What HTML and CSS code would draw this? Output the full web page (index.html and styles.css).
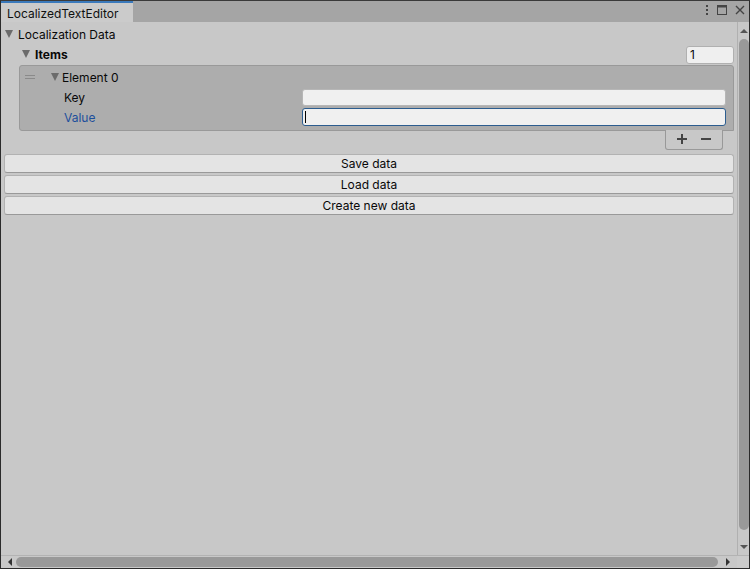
FILE: index.html
```html
<!DOCTYPE html>
<html>
<head>
<meta charset="utf-8">
<link rel="stylesheet" href="styles.css">
</head>
<body>
<div class="window">
  <div class="tabbar">
    <div class="tab">LocalizedTextEditor</div>
    <div class="tab-spacer"></div>
    <div class="win-icons">
      <svg class="ico" width="6" height="12" viewBox="0 0 6 12"><rect x="2" y="1" width="2" height="2" fill="#444"/><rect x="2" y="5" width="2" height="2" fill="#444"/><rect x="2" y="9" width="2" height="2" fill="#444"/></svg>
      <svg class="ico" width="12" height="12" viewBox="0 0 12 12"><rect x="1.5" y="1.5" width="9" height="9" fill="none" stroke="#444" stroke-width="1"/><rect x="1" y="1" width="10" height="2.5" fill="#444"/></svg>
      <svg class="ico" width="12" height="12" viewBox="0 0 12 12"><path d="M2 2 L10 10 M10 2 L2 10" stroke="#444" stroke-width="1.4"/></svg>
    </div>
  </div>
  <div class="body">
    <div class="content">
      <div class="row foldout">
        <span class="tri"></span><span class="label">Localization Data</span>
      </div>
      <div class="row items">
        <span class="tri"></span><span class="label bold">Items</span>
        <span class="grow"></span>
        <span class="intfield">1</span>
      </div>
      <div class="list">
        <div class="element-row">
          <span class="handle"></span>
          <span class="tri small-gap"></span><span class="label">Element 0</span>
        </div>
        <div class="prop-row">
          <span class="prop-label">Key</span>
          <span class="textfield"></span>
        </div>
        <div class="prop-row">
          <span class="prop-label focus">Value</span>
          <span class="textfield focused"><span class="caret"></span></span>
        </div>
      </div>
      <div class="list-footer-wrap">
        <div class="list-footer">
          <svg width="12" height="12" viewBox="0 0 12 12"><path d="M6 1 V11 M1 6 H11" stroke="#444" stroke-width="2"/></svg>
          <svg width="12" height="12" viewBox="0 0 12 12"><path d="M1 6 H11" stroke="#444" stroke-width="2"/></svg>
        </div>
      </div>
      <div class="buttons">
        <div class="btn">Save data</div>
        <div class="btn">Load data</div>
        <div class="btn">Create new data</div>
      </div>
    </div>
    <div class="vscroll">
      <svg class="arrow" width="8" height="6" viewBox="0 0 8 6"><path d="M0 5 L4 1 L8 5 Z" fill="#555"/></svg>
      <div class="vthumb"></div>
      <svg class="arrow" width="8" height="6" viewBox="0 0 8 6"><path d="M0 1 L4 5 L8 1 Z" fill="#555"/></svg>
    </div>
  </div>
  <div class="hbar">
    <div class="hscroll">
      <svg class="arrow" width="6" height="8" viewBox="0 0 6 8"><path d="M5 0 L1 4 L5 8 Z" fill="#333"/></svg>
      <div class="hthumb"></div>
      <svg class="arrow" width="6" height="8" viewBox="0 0 6 8"><path d="M1 0 L5 4 L1 8 Z" fill="#333"/></svg>
    </div>
    <div class="corner"></div>
  </div>
</div>
</body>
</html>
```

FILE: styles.css
```css
* { box-sizing: border-box; }
html, body { margin: 0; padding: 0; }
body {
  font-family: Inter, "Liberation Sans", Arial, sans-serif;
  font-size: 12px;
  color: #090909;
  background: #232323;
}
.window {
  width: 750px;
  height: 569px;
  display: flex;
  flex-direction: column;
  background: #c8c8c8;
  border-left: 1px solid #2b2b2b;
  border-right: 1px solid #2b2b2b;
  border-bottom: 1px solid #2b2b2b;
  border-top: 1px solid #3a3a3a;
  overflow: hidden;
}
.tabbar {
  height: 21px;
  display: flex;
  background: #a5a5a5;
  flex-shrink: 0;
}
.tab {
  width: 132px;
  background: #cbcbcb;
  border-top: 2px solid #3a79bb;
  padding: 2px 0 0 6px;
  line-height: 17px;
  font-size: 12px;
  color: #101010;
}
.tab-spacer { flex: 1; }
.win-icons {
  display: flex;
  align-items: center;
  gap: 6px;
  padding: 0 3px 3px 0;
}
.ico { display: block; }
.body {
  flex: 1;
  display: flex;
  min-height: 0;
}
.content {
  flex: 1;
  padding: 2px 3px 0 3px;
}
.row {
  display: flex;
  align-items: center;
  height: 20px;
}
.tri {
  width: 0; height: 0;
  border-left: 4px solid transparent;
  border-right: 4px solid transparent;
  border-top: 8px solid #6b6b6b;
  margin-right: 5px;
}
.tri.small-gap { margin-right: 3px; }
.foldout { padding-left: 1px; }
.items { padding-left: 18px; height: 20px; }
.bold { font-weight: 700; }
.grow { flex: 1; }
.intfield {
  width: 48px;
  height: 18px;
  background: #efefef;
  border: 1px solid #b0b0b0;
  border-radius: 3px;
  padding-left: 3px;
  line-height: 16px;
  margin-top: 1px;
}
.list {
  margin: 1px 0 0 15px;
  background: #adadad;
  border: 1px solid #999;
  border-radius: 3px 3px 0 3px;
  height: 66px;
  padding-top: 1px;
}
.element-row {
  display: flex;
  align-items: center;
  height: 20px;
  padding-left: 5px;
}
.handle {
  width: 10px;
  height: 4px;
  border-top: 1px solid #8a8a8a;
  border-bottom: 1px solid #8a8a8a;
  margin-right: 16px;
}
.prop-row {
  display: flex;
  align-items: center;
  height: 20px;
  padding-left: 44px;
  padding-right: 7px;
}
.prop-label { width: 238px; }
.prop-label.focus { color: #1d4f9c; }
.textfield {
  flex: 1;
  height: 17px;
  background: #f0f0f0;
  border: 1px solid #b6b6b6;
  border-radius: 3px;
  position: relative;
}
.textfield.focused {
  height: 18px;
  border: 1px solid #2c5d8f;
}
.caret {
  position: absolute;
  left: 2px; top: 2px;
  width: 1px; height: 12px;
  background: #000;
}
.list-footer-wrap {
  display: flex;
  justify-content: flex-end;
  padding-right: 11px;
  height: 20px;
}
.list-footer {
  width: 58px;
  height: 20px;
  background: #c8c8c8;
  border: 1px solid #999;
  border-top: none;
  border-radius: 0 0 3px 3px;
  margin-top: -1px;
  display: flex;
  align-items: center;
  justify-content: center;
  gap: 12px;
  padding-bottom: 1px;
}
.buttons {
  margin-top: 3px;
  display: flex;
  flex-direction: column;
  gap: 2px;
}
.btn {
  height: 19px;
  background: #e4e4e4;
  border: 1px solid #b2b2b2;
  border-bottom-color: #999;
  border-radius: 3px;
  text-align: center;
  line-height: 17px;
  color: #090909;
}
.vscroll {
  width: 12px;
  border-left: 1px solid #b0b0b0;
  display: flex;
  flex-direction: column;
  align-items: center;
  padding: 6px 0 5px 0;
  background: #c8c8c8;
}
.vthumb {
  width: 10px;
  flex: 1;
  margin: 5px 0 14px 1px;
  background: #999;
  border-radius: 5px;
}
.arrow { display: block; flex-shrink: 0; }
.hbar {
  height: 13px;
  display: flex;
  flex-shrink: 0;
  border-top: 1px solid #b3b3b3;
}
.hscroll {
  flex: 1;
  display: flex;
  align-items: center;
  padding: 0 6px;
  background: #c8c8c8;
}
.hthumb {
  flex: 1;
  height: 10px;
  margin: 0 7px 0 3px;
  background: #999;
  border-radius: 5px;
}
.corner {
  width: 12px;
  background: #cbcbcb;
}
```
